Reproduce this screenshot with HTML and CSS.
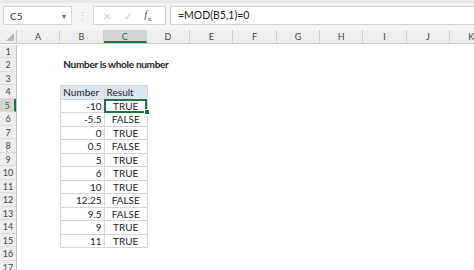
FILE: index.html
```html
<!DOCTYPE html>
<html lang="en">
<head>
    <meta charset="UTF-8">
    <meta name="viewport" content="width=device-width, initial-scale=1.0">
    <title>Number is whole number</title>
    <link rel="stylesheet" href="styles.css">
</head>
<body>
    <div class="toolbar">
        <div class="namebox">
            <span>C5</span>
            <span class="caret">&#9662;</span>
        </div>
        <div class="grip">&#8942;</div>
        <div class="fbuttons">
            <span class="fbtn">&#10005;</span>
            <span class="fbtn">&#10003;</span>
            <span class="fbtn fx"><i>f</i><sub>x</sub></span>
        </div>
        <div class="formula">=MOD(B5,1)=0</div>
    </div>

    <div class="col-headers">
        <div class="corner"><span class="corner-tri"></span></div>
        <div class="col">A</div>
        <div class="col">B</div>
        <div class="col active">C</div>
        <div class="col">D</div>
        <div class="col">E</div>
        <div class="col">F</div>
        <div class="col">G</div>
        <div class="col">H</div>
        <div class="col">I</div>
        <div class="col">J</div>
        <div class="col">K</div>
    </div>

    <div class="sheet">
        <div class="row-headers">
            <div class="rh">1</div>
            <div class="rh">2</div>
            <div class="rh">3</div>
            <div class="rh">4</div>
            <div class="rh active">5</div>
            <div class="rh">6</div>
            <div class="rh">7</div>
            <div class="rh">8</div>
            <div class="rh">9</div>
            <div class="rh">10</div>
            <div class="rh">11</div>
            <div class="rh">12</div>
            <div class="rh">13</div>
            <div class="rh">14</div>
            <div class="rh">15</div>
            <div class="rh">16</div>
            <div class="rh">17</div>
        </div>

        <div class="cells">
            <div class="blank-row"></div>
            <div class="title">Number is whole number</div>
            <div class="blank-row"></div>

            <table class="data">
                <tr class="head">
                    <td class="num-h">Number</td>
                    <td class="res-h">Result</td>
                </tr>
                <tr><td class="num">-10</td><td class="res selected">TRUE<span class="handle"></span></td></tr>
                <tr><td class="num">-5.5</td><td class="res">FALSE</td></tr>
                <tr><td class="num">0</td><td class="res">TRUE</td></tr>
                <tr><td class="num">0.5</td><td class="res">FALSE</td></tr>
                <tr><td class="num">5</td><td class="res">TRUE</td></tr>
                <tr><td class="num">6</td><td class="res">TRUE</td></tr>
                <tr><td class="num">10</td><td class="res">TRUE</td></tr>
                <tr><td class="num">12.25</td><td class="res">FALSE</td></tr>
                <tr><td class="num">9.5</td><td class="res">FALSE</td></tr>
                <tr><td class="num">9</td><td class="res">TRUE</td></tr>
                <tr><td class="num">11</td><td class="res">TRUE</td></tr>
            </table>
        </div>
    </div>
</body>
</html>
```

FILE: styles.css
```css
body {
    margin: 0;
    font-family: 'Lato', 'Liberation Sans', sans-serif;
    font-size: 10px;
    color: #222;
    background-color: #ffffff;
    overflow: hidden;
}

/* formula bar */

.toolbar {
    display: flex;
    align-items: center;
    height: 30px;
    padding: 0 0 2px 3px;
    box-sizing: border-box;
    background-color: #f3f3f3;
    border-top: 3px solid #e8e8e8;
}

.namebox {
    display: flex;
    align-items: center;
    justify-content: space-between;
    width: 69px;
    height: 19px;
    box-sizing: border-box;
    padding: 0 5px 0 6px;
    background-color: #ffffff;
    border: 1px solid #d4d4d4;
    color: #333;
    font-size: 10px;
}

.caret {
    font-size: 8px;
    color: #666;
}

.grip {
    width: 21px;
    text-align: center;
    color: #c4c4c4;
    font-size: 11px;
}

.fbuttons {
    display: flex;
    align-items: center;
    width: 73px;
    height: 19px;
    box-sizing: border-box;
    padding-left: 9px;
    background-color: #ffffff;
    border: 1px solid #d4d4d4;
}

.fbtn {
    width: 23px;
    color: #cccccc;
    font-size: 10px;
}

.fbtn.fx {
    color: #555;
    font-family: 'Liberation Serif', serif;
    font-size: 11px;
}

.fbtn.fx sub {
    font-size: 7px;
}

.formula {
    flex: 1;
    height: 19px;
    box-sizing: border-box;
    margin-left: 4px;
    padding: 2px 0 0 7px;
    background-color: #ffffff;
    border: 1px solid #d4d4d4;
    border-right: none;
    font-size: 10.5px;
    color: #222;
}

/* column headers */

.col-headers {
    display: flex;
    height: 14px;
    background-color: #eeeeee;
    border-bottom: 1px solid #c8c8c8;
    box-sizing: border-box;
}

.corner {
    position: relative;
    width: 17px;
    flex-shrink: 0;
    border-right: 1px solid #c8c8c8;
    box-sizing: border-box;
}

.corner-tri {
    position: absolute;
    right: 2px;
    bottom: 2px;
    border-left: 8px solid transparent;
    border-bottom: 8px solid #b8b8b8;
}

.col {
    width: 43.3px;
    flex-shrink: 0;
    box-sizing: border-box;
    border-right: 1px solid #d0d0d0;
    text-align: center;
    line-height: 13px;
    font-size: 9px;
    color: #444;
}

.col.active {
    background-color: #d4d4d4;
    border-bottom: 2px solid #217346;
    color: #217346;
}

/* sheet body */

.sheet {
    display: flex;
    padding-top: 0.5px;
}

.row-headers {
    width: 17px;
    flex-shrink: 0;
    background-color: #eeeeee;
    border-right: 1px solid #c8c8c8;
    box-sizing: border-box;
}

.rh {
    height: 13.5px;
    line-height: 13.5px;
    box-sizing: border-box;
    border-bottom: 1px solid #dcdcdc;
    text-align: center;
    font-size: 9px;
    color: #444;
}

.rh.active {
    background-color: #d4d4d4;
    border-right: 2px solid #217346;
    color: #217346;
}

.cells {
    flex: 1;
    padding-left: 43.3px;
}

.blank-row {
    height: 13.5px;
}

.title {
    height: 13.5px;
    line-height: 13.5px;
    padding-left: 3px;
    font-weight: bold;
    letter-spacing: -0.3px;
}

.data {
    border-collapse: collapse;
}

.data td {
    width: 43.3px;
    height: 13.5px;
    padding: 0 2px;
    box-sizing: border-box;
    border: 1px solid #d6d6d6;
    line-height: 12px;
    white-space: nowrap;
}

.data .head td {
    background-color: #dde5f0;
}

.num {
    text-align: right;
}

.res {
    text-align: center;
}

.res-h,
.num-h {
    text-align: left;
}

.selected {
    position: relative;
    outline: 2px solid #217346;
    outline-offset: -2px;
}

.handle {
    position: absolute;
    right: -3px;
    bottom: -3px;
    width: 4px;
    height: 4px;
    background-color: #217346;
    border: 1px solid #ffffff;
}
```
